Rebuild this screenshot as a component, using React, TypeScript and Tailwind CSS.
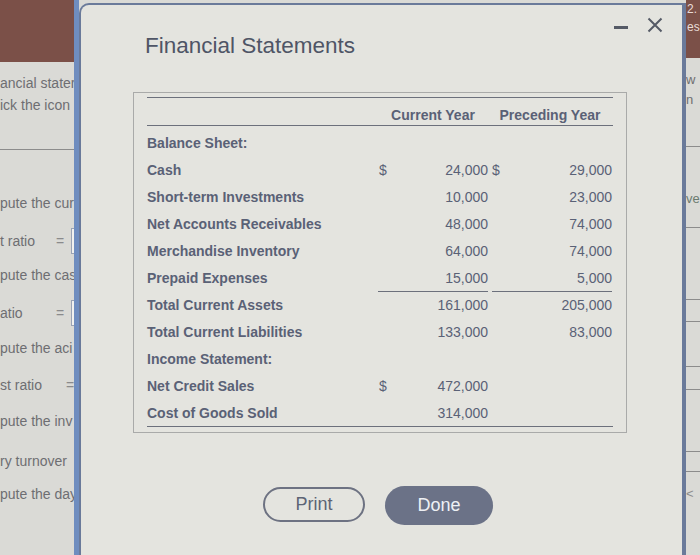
import React from "react";

type Row = {
  label: string;
  d1?: boolean;
  c?: string;
  d2?: boolean;
  p?: string;
  underline?: boolean;
};

const rows: Row[] = [
  { label: "Balance Sheet:" },
  { label: "Cash", d1: true, c: "24,000", d2: true, p: "29,000" },
  { label: "Short-term Investments", c: "10,000", p: "23,000" },
  { label: "Net Accounts Receivables", c: "48,000", p: "74,000" },
  { label: "Merchandise Inventory", c: "64,000", p: "74,000" },
  { label: "Prepaid Expenses", c: "15,000", p: "5,000", underline: true },
  { label: "Total Current Assets", c: "161,000", p: "205,000" },
  { label: "Total Current Liabilities", c: "133,000", p: "83,000" },
  { label: "Income Statement:" },
  { label: "Net Credit Sales", d1: true, c: "472,000" },
  { label: "Cost of Goods Sold", c: "314,000" },
];

function LeftLine({ text, mt, eq, eqX, box }: { text: string; mt: string; eq?: boolean; eqX?: string; box?: boolean }) {
  return (
    <div className={`relative flex h-[22px] items-center whitespace-nowrap text-[14px] text-[#6e6e72] ${mt}`}>
      <span>{text}</span>
      {eq && <span className={`absolute ${eqX ?? "left-[56px]"} text-[#8a8a8c]`}>=</span>}
      {box && <span className="absolute right-0 top-[-2px] h-[26px] w-[3px] border border-r-0 border-[#9aa3b5] bg-[#f2f2ef]" />}
    </div>
  );
}

export default function App() {
  return (
    <div className="flex h-[555px] w-[700px] overflow-hidden bg-[#dadad6] font-['Liberation_Sans',Arial,sans-serif]">
      {/* left background strip */}
      <div className="flex w-[74px] shrink-0 flex-col overflow-hidden">
        <div className="h-[62px] shrink-0 bg-[#7b5048]" />
        <div className="flex flex-col">
          <LeftLine text="ancial stater" mt="mt-[10px]" />
          <LeftLine text="ick the icon" mt="mt-0" />
          <div className="mt-[33px] h-px w-full bg-[#8c8c8c]" />
          <LeftLine text="pute the cur" mt="mt-[42px]" />
          <LeftLine text="t ratio" mt="mt-[16px]" eq box />
          <LeftLine text="pute the cas" mt="mt-[12px]" />
          <LeftLine text="atio" mt="mt-[16px]" eq box />
          <LeftLine text="pute the aci" mt="mt-[13px]" />
          <LeftLine text="st ratio" mt="mt-[15px]" eq eqX="left-[66px]" />
          <LeftLine text="pute the inv" mt="mt-[14px]" />
          <LeftLine text="ry turnover" mt="mt-[18px]" />
          <LeftLine text="pute the day" mt="mt-[11px]" />
        </div>
      </div>
      <div className="w-[5px] shrink-0 bg-[#6f8dbf]" />

      {/* modal */}
      <div className="mt-[3px] flex h-[560px] w-[607px] shrink-0 flex-col rounded-tl-[10px] border-l-[2px] border-t-[2px] border-r-[4px] border-[#6a7a9a] bg-[#e4e4df]">
        <div className="relative h-[87px] shrink-0">
          <div className="pl-[64px] pt-[28px] text-[22.5px] leading-[26px] text-[#4f5566]">Financial Statements</div>
          <div className="absolute left-[533px] top-[21px] h-[3px] w-[14px] bg-[#555a66]" />
          <svg className="absolute left-[566px] top-[12px]" width="16" height="16" viewBox="0 0 16 16">
            <path d="M1.5 1.5 L14.5 14.5 M14.5 1.5 L1.5 14.5" stroke="#555a66" strokeWidth="2" fill="none" />
          </svg>
        </div>

        {/* table box */}
        <div className="ml-[52px] h-[341px] w-[494px] border border-[#a9aaa9] px-[13px] pt-[4px]">
          <div className="h-px w-full bg-[#6c707c]" />
          <div className="grid h-[27px] grid-cols-[231px_110px_124px] items-end text-[14px] leading-[16px] font-bold text-[#5a6176]">
            <div />
            <div className="pb-[2px] text-center">Current Year</div>
            <div className="pb-[2px] text-center">Preceding Year</div>
          </div>
          <div className="h-px w-full bg-[#6c707c]" />
          <div className="mt-[4px] flex flex-col">
            {rows.map((r, i) => (
              <div
                key={i}
                className={`grid h-[27px] grid-cols-[231px_14px_96px_16px_108px] items-center text-[14px] text-[#5a6176] ${i === rows.length - 1 ? "border-b border-[#6c707c]" : ""}`}
              >
                <div className="font-bold">{r.label}</div>
                <div className={`flex h-full items-center pl-[1px] ${r.underline ? "border-b border-[#6c707c]" : ""}`}>
                  {r.d1 ? "$" : ""}
                </div>
                <div className={`flex h-full items-center justify-end ${r.underline ? "border-b border-[#6c707c]" : ""}`}>
                  {r.c ?? ""}
                </div>
                <div className="flex h-full items-center">
                  <div className={`ml-[4px] flex h-full flex-1 items-center ${r.underline ? "border-b border-[#6c707c]" : ""}`}>
                    {r.d2 ? "$" : ""}
                  </div>
                </div>
                <div className={`flex h-full items-center justify-end ${r.underline ? "border-b border-[#6c707c]" : ""}`}>
                  {r.p ?? ""}
                </div>
              </div>
            ))}
          </div>
        </div>

        {/* buttons */}
        <div className="mt-[54px] flex items-start gap-[20px] pl-[182px]">
          <button className="flex h-[35px] w-[102px] items-center justify-center rounded-full border-2 border-[#6d7282] text-[18px] text-[#5d6475]">
            Print
          </button>
          <button className="-mt-px flex h-[39px] w-[108px] items-center justify-center rounded-full bg-[#6b7287] text-[18px] text-[#eef0f4]">
            Done
          </button>
        </div>
      </div>

      {/* right strip */}
      <div className="flex w-[14px] shrink-0 flex-col overflow-hidden">
        <div className="flex h-[58px] shrink-0 flex-col bg-[#7b5048] pl-[1px] text-[12px] leading-[18px] text-[#e8dcd8]">
          <span>2.</span>
          <span>es</span>
        </div>
        <div className="mt-[14px] text-[13px] leading-[16px] text-[#6e6e70]">w</div>
        <div className="mt-[4px] text-[13px] leading-[16px] text-[#6e6e70]">n</div>
        <div className="mt-[38px] h-px bg-[#8c8c8c]" />
        <div className="mt-[44px] text-[13px] leading-[16px] text-[#6b7a70]">ve</div>
        <div className="mt-[20px] h-px bg-[#8c8c8c]" />
        <div className="mt-[71px] h-px bg-[#8c8c8c]" />
        <div className="mt-[21px] h-px bg-[#8c8c8c]" />
        <div className="mt-[44px] h-px bg-[#8c8c8c]" />
        <div className="mt-[22px] h-px bg-[#8c8c8c]" />
        <div className="mt-[61px] h-px bg-[#8c8c8c]" />
        <div className="mt-[19px] h-px bg-[#8c8c8c]" />
        <div className="mt-[14px] text-[13px] leading-[16px] text-[#8c8c8c]">&lt;</div>
      </div>
    </div>
  );
}
